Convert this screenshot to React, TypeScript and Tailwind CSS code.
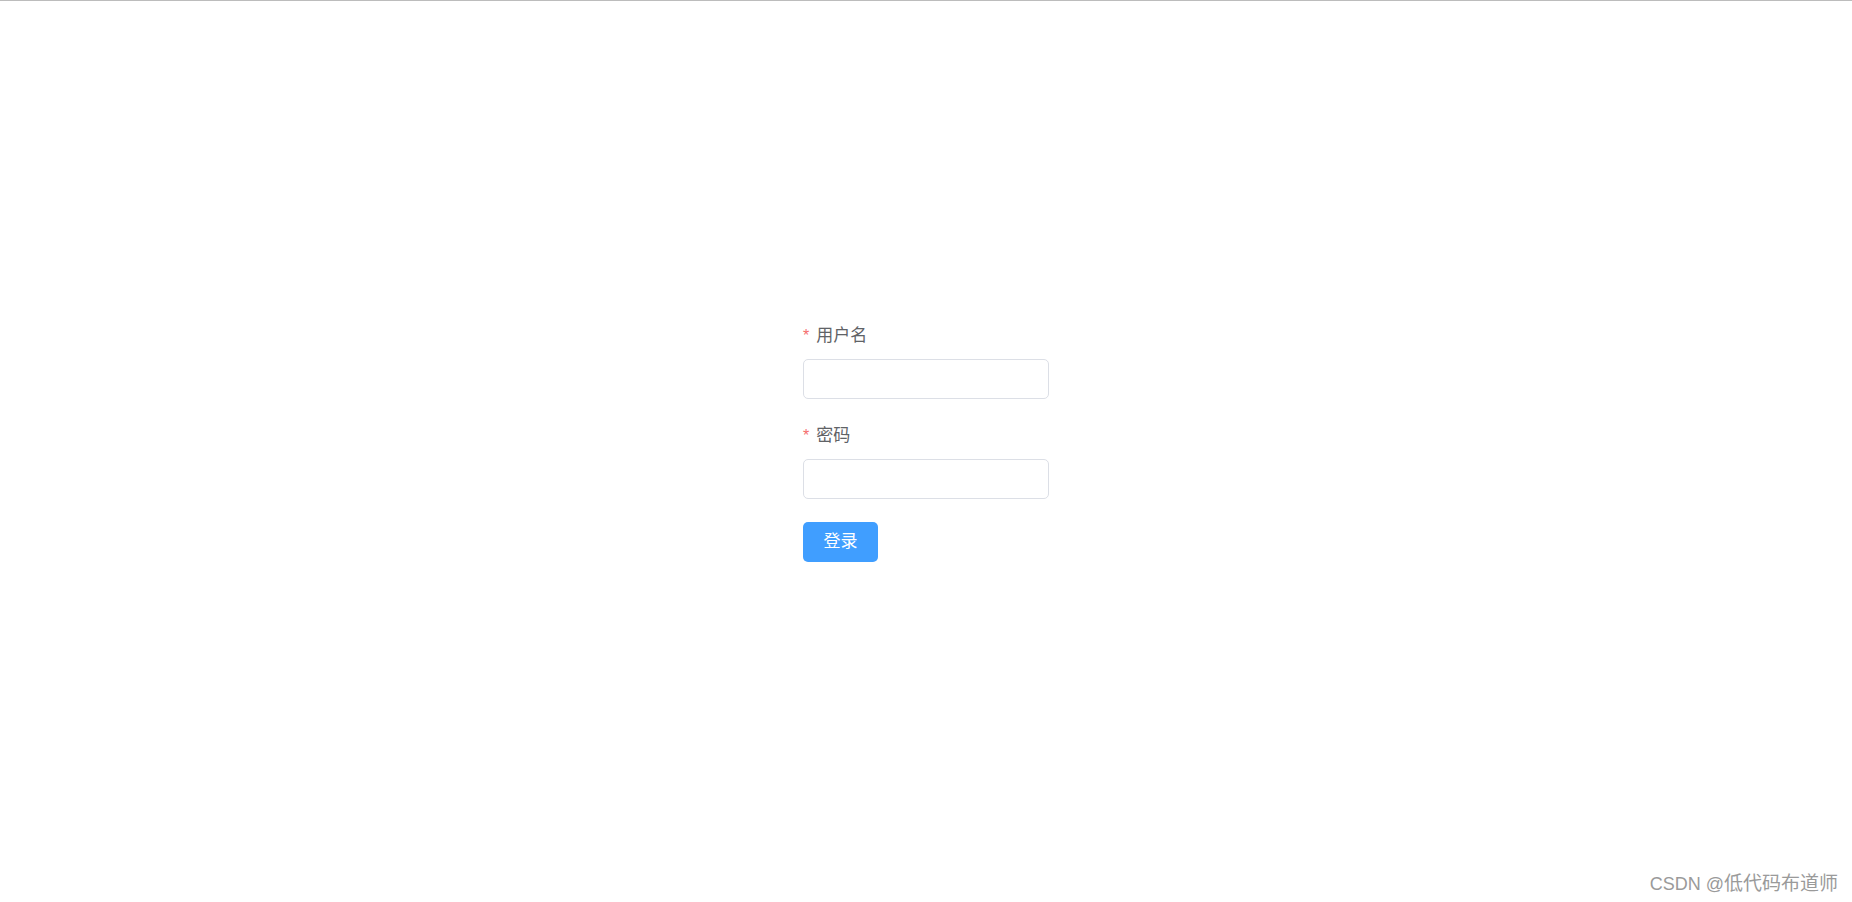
export default function App() {
  return (
    <div className="relative w-full h-[902px] bg-white border-t border-[#bcbcbc] overflow-hidden">
      <div className="flex justify-center pt-[323px] font-['Liberation_Sans','Noto_Sans_CJK_SC',sans-serif]">
        <form className="w-[246px] flex flex-col" onSubmit={(e) => e.preventDefault()}>
          <label className="h-[24px] leading-[24px] text-[17px] text-[#606266] mb-[11px] flex items-center">
            <span className="text-[#f56c6c] mr-[7px] text-[16px]">*</span>
            用户名
          </label>
          <input className="h-[40px] w-full border border-[#dcdfe6] rounded-[5px] px-[15px] outline-none text-[14px] text-[#606266]" />
          <label className="h-[24px] leading-[24px] text-[17px] text-[#606266] mt-[25px] mb-[11px] flex items-center">
            <span className="text-[#f56c6c] mr-[7px] text-[16px]">*</span>
            密码
          </label>
          <input type="password" className="h-[40px] w-full border border-[#dcdfe6] rounded-[5px] px-[15px] outline-none text-[14px] text-[#606266]" />
          <div className="mt-[23px]">
            <button
              type="submit"
              className="w-[75px] h-[40px] bg-[#409eff] text-white text-[17px] rounded-[5px] flex items-center justify-center"
            >
              登录
            </button>
          </div>
        </form>
      </div>
      <div className="absolute right-[14px] bottom-[7px] text-[18px] leading-[22px] text-[#9a9a9a] font-['Liberation_Sans','Noto_Sans_CJK_SC',sans-serif]">
        CSDN @<span className="text-[19px]">低代码布道师</span>
      </div>
    </div>
  );
}
